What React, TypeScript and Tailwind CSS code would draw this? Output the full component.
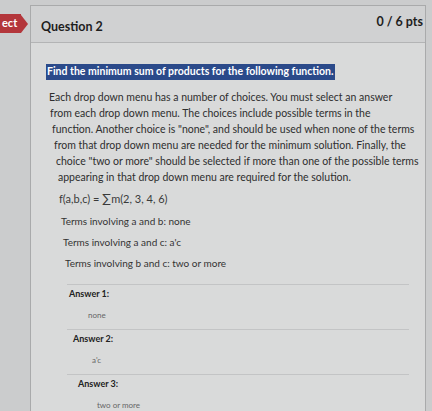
import React from "react"

const lines = [
  { text: "Each drop down menu has a number of choices. You must select an answer", pad: "pl-[18px]" },
  { text: "from each drop down menu. The choices include possible terms in the", pad: "pl-[19px]" },
  { text: "function. Another choice is \"none\", and should be used when none of the terms", pad: "pl-[21px]" },
  { text: "from that drop down menu are needed for the minimum solution. Finally, the", pad: "pl-[23px]" },
  { text: "choice \"two or more\" should be selected if more than one of the possible terms", pad: "pl-[25px]" },
  { text: "appearing in that drop down menu are required for the solution.", pad: "pl-[27px]" },
]

const answers = [
  { label: "Answer 1:", value: "none", pad: "pl-[2px]", valPad: "pl-[21px]" },
  { label: "Answer 2:", value: "a'c", pad: "pl-[6px]", valPad: "pl-[25px]" },
  { label: "Answer 3:", value: "two or more", pad: "pl-[11px]", valPad: "pl-[30px]" },
]

export default function App() {
  return (
    <div className="w-[432px] h-[411px] overflow-hidden bg-[#cbcccd] font-['Lato','Open_Sans',sans-serif] text-[#2d3b45]">
      <div className="relative mt-[5px] ml-[30px] mr-[6px] h-[406px] border-l border-t border-r border-[#a9aaab] bg-[#d9dada]">
        {/* red "incorrect" tag */}
        <div className="absolute -left-[31px] top-[8px] flex h-[19px] items-center">
          <div className="flex h-full items-center bg-[#b3363b] pl-[2px] pr-[4px] text-[11px] font-bold text-white">
            ect
          </div>
          <div className="h-0 w-0 border-y-[9.5px] border-l-[7px] border-y-transparent border-l-[#b3363b]" />
        </div>

        {/* header */}
        <div className="flex h-[37px] items-center justify-between border-b border-[#b3b4b5] bg-[#d0d1d2] pl-[10px] pr-[2px]">
          <div className="pt-[7px] text-[12.5px] font-bold text-[#1e1e1e]">Question 2</div>
          <div className="-mt-[4px] text-[12.5px] font-bold text-[#1e1e1e]">0 / 6 pts</div>
        </div>

        {/* body */}
        <div className="pt-[21px] pr-[12px]">
          <div className="flex pl-[15px]">
            <span className="flex h-[16px] items-center bg-[#2b4a8a] px-[1px] text-[10.5px] font-bold text-white">
              Find the minimum sum of products for the following function.
            </span>
          </div>

          <div className="mt-[9px] text-[10.5px] leading-[16px] text-[#2e2e2e]">
            {lines.map((l) => (
              <div key={l.text} className={`whitespace-nowrap ${l.pad}`}>
                {l.text}
              </div>
            ))}
          </div>

          <div className="mt-[6px] pl-[28px] text-[11px] leading-[14px] text-[#3a3a3a]">
            f(a,b,c) = <span className="text-[13px]">∑</span>m(2, 3, 4, 6)
          </div>

          <div className="mt-[8px] flex flex-col gap-[7px] text-[10px] leading-[14px] text-[#333]">
            <div className="pl-[30px]">Terms involving a and b: none</div>
            <div className="pl-[32px]">Terms involving a and c: a'c</div>
            <div className="pl-[34px]">Terms involving b and c: two or more</div>
          </div>

          <div className="mt-[14px] ml-[36px] mr-[4px] flex flex-col">
            {answers.map((a) => (
              <div key={a.label} className="border-t border-[#c3c4c5]">
                <div className={`pt-[2px] text-[9px] font-bold leading-[14px] text-[#222] ${a.pad}`}>
                  {a.label}
                </div>
                <div className={`pt-[9px] pb-[9px] text-[8px] leading-[10px] text-[#666] ${a.valPad}`}>
                  {a.value}
                </div>
              </div>
            ))}
          </div>
        </div>
      </div>
    </div>
  )
}
